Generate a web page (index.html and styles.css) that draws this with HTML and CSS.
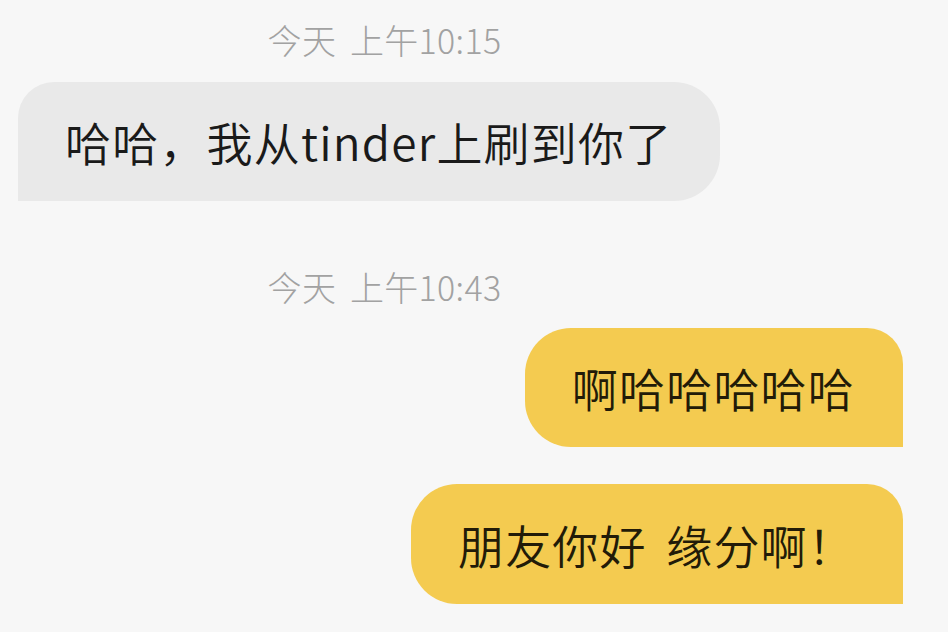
FILE: index.html
```html
<!DOCTYPE html>
<html lang="zh-CN">
<head>
<meta charset="utf-8">
<link rel="stylesheet" href="styles.css">
</head>
<body>
<div class="chat">
  <div class="time time-first">今天 上午10:15</div>
  <div class="row row-left">
    <div class="bubble bubble-in">哈哈，我从tinder上刷到你了</div>
  </div>
  <div class="time time-second">今天 上午10:43</div>
  <div class="row row-right row-first-out">
    <div class="bubble bubble-out">啊哈哈哈哈哈</div>
  </div>
  <div class="row row-right row-second-out">
    <div class="bubble bubble-out">朋友你好 缘分啊！</div>
  </div>
</div>
</body>
</html>
```

FILE: styles.css
```css
html, body {
  margin: 0;
  padding: 0;
  background: #f7f7f7;
}

body {
  width: 948px;
  height: 632px;
  overflow: hidden;
  font-family: "Noto Sans CJK SC", "Noto Sans", sans-serif;
}

.chat {
  display: flex;
  flex-direction: column;
}

.time {
  width: 769px;
  text-align: center;
  font-size: 34px;
  font-weight: 300;
  line-height: 40px;
  color: #a2a2a2;
  letter-spacing: 0.3px;
  word-spacing: 6px;
}

.time-first {
  margin-top: 20px;
}

.time-second {
  margin-top: 66px;
}

.row {
  display: flex;
}

.row-left {
  justify-content: flex-start;
  margin-top: 22px;
  padding-left: 18px;
}

.row-right {
  justify-content: flex-end;
  padding-right: 45px;
}

.row-first-out {
  margin-top: 21px;
}

.row-second-out {
  margin-top: 37px;
}

.bubble {
  font-size: 46px;
  font-weight: 350;
  line-height: 119px;
  height: 119px;
  padding: 0 48px 0 47px;
  white-space: nowrap;
  letter-spacing: 1.2px;
  word-spacing: 8px;
}

.bubble-in {
  background: #e9e9e9;
  color: #1a1a1a;
  border-radius: 36px 46px 46px 0;
}

.bubble-out {
  background: #f4cb50;
  color: #221b08;
  border-radius: 46px 36px 0 46px;
}

.row-second-out .bubble {
  height: 120px;
  line-height: 120px;
}
```
